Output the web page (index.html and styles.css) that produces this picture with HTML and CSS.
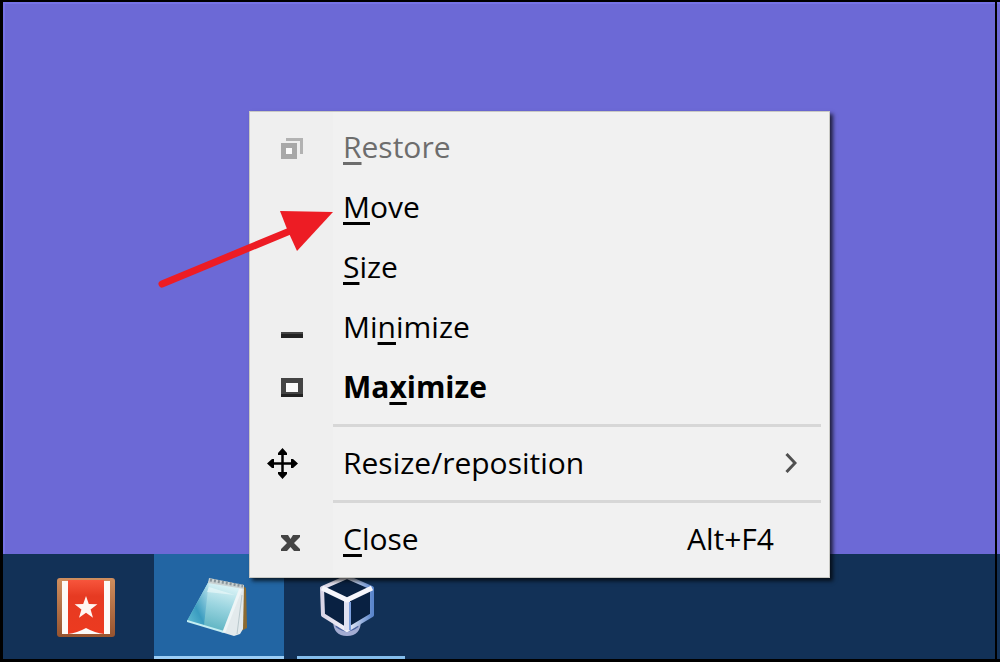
FILE: index.html
```html
<!DOCTYPE html>
<html lang="en">
<head>
    <meta charset="UTF-8">
    <meta name="viewport" content="width=device-width, initial-scale=1.0">
    <title>Window Menu</title>
    <link rel="stylesheet" href="styles.css">
</head>
<body>
    <div class="screen">
        <main class="desktop"></main>

        <nav class="taskbar" aria-label="Taskbar">
            <button class="app" aria-label="Wunderlist">
                <svg viewBox="0 0 64 64">
                    <defs>
                        <linearGradient id="red" x1="0" y1="0" x2="0" y2="1">
                            <stop offset="0" stop-color="#f7553c"/>
                            <stop offset="0.3" stop-color="#e63a22"/>
                            <stop offset="1" stop-color="#ec3a20"/>
                        </linearGradient>
                        <linearGradient id="wood" x1="0" y1="0" x2="0" y2="1">
                            <stop offset="0" stop-color="#cf8e5e"/>
                            <stop offset="1" stop-color="#96532f"/>
                        </linearGradient>
                    </defs>
                    <rect x="3" y="3" width="58" height="59" rx="3" fill="url(#wood)"/>
                    <rect x="8" y="6" width="48" height="53" fill="#fdfaf8"/>
                    <path d="M14 5h36v54q-9-1-18-6q-9 5-18 6z" fill="url(#red)"/>
                    <path d="M32 21l2.800 8 8.600.2-6.800 5.200 2.400 8.300-7-4.900-7 4.900 2.400-8.300-6.800-5.200 8.600-.2z" fill="#fff6f2"/>
                </svg>
            </button>
            <button class="app active" aria-label="Notepad">
                <svg viewBox="0 0 64 64">
                    <defs>
                        <linearGradient id="sheet" x1="0.6" y1="0" x2="0.3" y2="1">
                            <stop offset="0" stop-color="#e0f6f8"/>
                            <stop offset="0.45" stop-color="#9bd5e0"/>
                            <stop offset="1" stop-color="#53aebd"/>
                        </linearGradient>
                        <linearGradient id="fold" x1="1" y1="0" x2="0" y2="1">
                            <stop offset="0" stop-color="#c5eaf0"/>
                            <stop offset="0.6" stop-color="#3a9cc0"/>
                            <stop offset="1" stop-color="#62bdd3"/>
                        </linearGradient>
                    </defs>
                    <path d="M55 10l4 3 1 40-6 3z" fill="#8b6a31"/>
                    <path d="M54 12l3-1-1 43-3 5-6 2-13-4z" fill="#e3eaec"/>
                    <path d="M55 20l-5 39" stroke="#b9c8cc" stroke-width="1" fill="none"/>
                    <path d="M22 6l32 6-17 45L0 46z" fill="url(#sheet)"/>
                    <path d="M22 6l-5 44L0 46z" fill="url(#fold)"/>
                    <path d="M22 12l26 8-28-3z" fill="#eefafa" opacity="0.6"/>
                    <path d="M0 46l37 11" stroke="#c4eef2" stroke-width="2"/>
                    <path d="M54 13L37 57" stroke="#eef5f6" stroke-width="3"/>
                    <path d="M22 3l35 7v4L21 8z" fill="#c9d2d2"/>
                    <path d="M23 5l33 6" stroke="#87949a" stroke-width="3" stroke-dasharray="2 2"/>
                </svg>
            </button>
            <button class="app running" aria-label="VirtualBox">
                <svg viewBox="0 0 64 64">
                    <defs>
                        <linearGradient id="edge" x1="0" y1="0" x2="1" y2="0">
                            <stop offset="0" stop-color="#d9d4e6"/>
                            <stop offset="0.5" stop-color="#f4f4fb"/>
                            <stop offset="1" stop-color="#5b86cc"/>
                        </linearGradient>
                    </defs>
                    <path d="M14 45q0 16 14 16t14-16z" fill="#a3acd2"/>
                    <path d="M17 51q11 9 22 0" stroke="#4b63a0" stroke-width="2" fill="none"/>
                    <path d="M28 2L53 13v27L28 55 4 40 3 13z" fill="#092142" stroke="url(#edge)" stroke-width="4" stroke-linejoin="round"/>
                    <path d="M28 25v30" stroke="#dfe2f3" stroke-width="6"/>
                    <path d="M31 27v28" stroke="#7da0de" stroke-width="2"/>
                    <path d="M3 13l25 12 25-12" stroke="#f6f6fc" stroke-width="5" fill="none" stroke-linejoin="round"/>
                </svg>
            </button>
        </nav>

        <ul class="menu">
            <li><button class="item" disabled>
                <svg class="icon" viewBox="0 0 83 60">
                    <path d="M36 22.500h15.500V37" fill="none" stroke="#b2b2b2" stroke-width="3"/>
                    <rect x="33.500" y="28.500" width="11" height="11" fill="#fafafa" stroke="#a8a8a8" stroke-width="5"/>
                </svg>
                <span><u>R</u>estore</span>
            </button></li>
            <li><button class="item"><span class="icon"></span><span><u>M</u>ove</span></button></li>
            <li><button class="item"><span class="icon"></span><span><u>S</u>ize</span></button></li>
            <li><button class="item">
                <svg class="icon" viewBox="0 0 83 60">
                    <rect x="31" y="35" width="22" height="6" fill="#222"/>
                    <rect x="31" y="35" width="22" height="2" fill="#444"/>
                </svg>
                <span>Mi<u>n</u>imize</span>
            </button></li>
            <li><button class="item default">
                <svg class="icon" viewBox="0 0 83 60">
                    <rect x="33.500" y="23.500" width="17" height="14" fill="#fafafa" stroke="#444" stroke-width="5"/>
                    <path d="M31 38.500h22" stroke="#222" stroke-width="3"/>
                </svg>
                <span>Ma<u>x</u>imize</span>
            </button></li>
            <li class="separator"></li>
            <li><button class="item">
                <svg class="icon" viewBox="0 0 83 60">
                    <path d="M20 30.500h25M32.500 18v25" stroke="#000" stroke-width="2.500"/>
                    <path d="M17 30.500l5-4.500h2v9h-2zM48 30.500l-5-4.500h-2v9h2zM32.500 15l4.500 5v2h-9v-2zM32.500 46l4.500-5v-2h-9v2z"/>
                </svg>
                <span>Resize/reposition</span>
                <svg class="chevron" viewBox="0 0 12 20">
                    <path d="M1.500 1l8.500 9-8.500 9" fill="none" stroke="#505050" stroke-width="3"/>
                </svg>
            </button></li>
            <li class="separator"></li>
            <li><button class="item">
                <svg class="icon" viewBox="0 0 83 60">
                    <path d="M31 26h7l2.500 4 2.500-4h7v2l-6 6 6 6v2h-6l-3.500-4-3.500 4h-6v-2l6-6-6-6z" fill="#444"/>
                </svg>
                <span><u>C</u>lose</span>
                <span class="shortcut">Alt+F4</span>
            </button></li>
        </ul>

        <!-- arrow pointing at Move -->
        <svg class="arrow" viewBox="0 0 200 110">
            <path d="M12 94L140 41" stroke="#ed1c24" stroke-width="7" stroke-linecap="round"/>
            <path d="M183 22L130 21l7 18 10 22z" fill="#ed1c24"/>
        </svg>
    </div>
</body>
</html>
```

FILE: styles.css
```css
body {
    margin: 0;
    font-family: "Open Sans", "Noto Sans", sans-serif;
}
.screen {
    position: relative;
    display: flex;
    flex-direction: column;
    height: 100vh;
    box-sizing: border-box;
    border: solid #000;
    border-width: 2px 0 3px 3px;
    overflow: hidden;
}
/* right edge of the frame, with a sliver of the desktop showing past it */
.screen::after {
    content: "";
    position: absolute;
    top: 0;
    right: 3px;
    bottom: 0;
    width: 2px;
    background: #000;
}
.desktop {
    flex: 1;
    background: #6c69d6;
    box-shadow: inset 2px 2px 0 #7673e6;
}
.taskbar {
    display: flex;
    gap: 3px;
    height: 105px;
    padding-left: 18px;
    background: #123157;
}
.app {
    display: flex;
    justify-content: center;
    align-items: center;
    width: 130px;
    padding: 3px 0 0;
    border: none;
    border-bottom: 3px solid transparent;
    background: transparent;
}
.app svg {
    width: 64px;
    height: 64px;
}
.active {
    background: #2265a3;
    border-bottom-color: #9bcdf6;
}
.running {
    width: 108px;
    margin-left: 10px;
    border-bottom-color: #84bdec;
}
.menu {
    position: absolute;
    top: 109px;
    left: 246px;
    width: 581px;
    box-sizing: border-box;
    margin: 0;
    padding: 5px 0 8px;
    list-style: none;
    border: 1px solid #c9c9c4;
    background: linear-gradient(to right, #efefef 83px, #f1f1f1 83px);
    box-shadow: 3px 3px 4px rgba(0, 0, 0, 0.7);
}
.item {
    display: grid;
    grid-template-columns: 83px 1fr auto;
    align-items: center;
    column-gap: 10px;
    width: 100%;
    height: 60px;
    padding: 0;
    border: none;
    background: transparent;
    color: #000;
    font-family: inherit;
    font-size: 30px;
    line-height: 40px;
    text-align: left;
}
.item:disabled {
    color: #6d6d6d;
}
.item:not(:disabled):hover {
    background: #dcdcdc;
}
.item u {
    text-decoration-thickness: 3px;
    text-underline-offset: 4px;
    text-decoration-skip-ink: none;
}
.default {
    font-weight: bold;
}
.icon {
    width: 83px;
    height: 60px;
}
.separator {
    height: 3px;
    margin: 0 8px 0 83px;
    border: solid transparent;
    border-width: 7px 0 6px;
    background: #d7d7d7 padding-box;
}
.shortcut {
    padding-right: 55px;
}
.chevron {
    width: 12px;
    height: 20px;
    margin-right: 32px;
}
.arrow {
    position: absolute;
    top: 188px;
    left: 147px;
    width: 200px;
    height: 110px;
    pointer-events: none;
}
```
